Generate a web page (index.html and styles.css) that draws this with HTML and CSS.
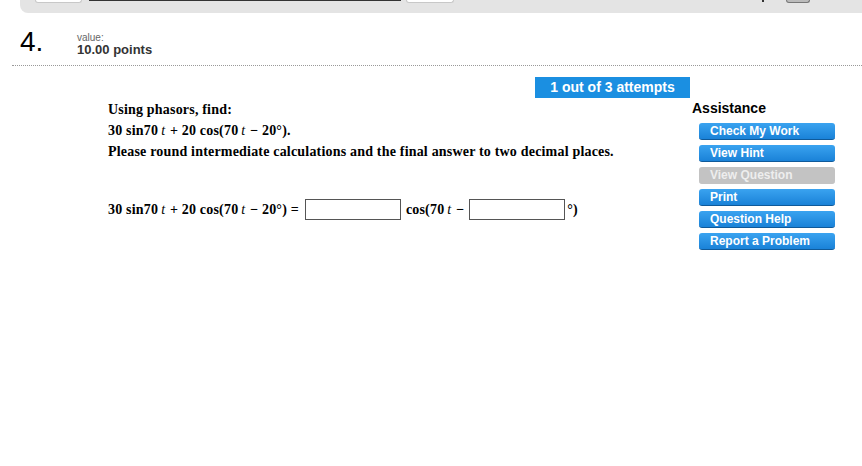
FILE: index.html
```html
<!DOCTYPE html>
<html>
<head>
<meta charset="utf-8">
<link rel="stylesheet" href="styles.css">
</head>
<body>
<div class="topbar">
  <div class="tb-btn tb-btn1"></div>
  <div class="tb-input"><div class="tb-arrow"></div></div>
  <div class="tb-btn tb-btn2"></div>
  <div class="tb-spacer"></div>
  <div class="tb-mark"></div>
  <div class="tb-icon"></div>
</div>
<div class="header">
  <div class="qnum">4.</div>
  <div class="value">
    <div class="value-label">value:</div>
    <div class="value-points">10.00 points</div>
  </div>
</div>
<div class="main">
  <div class="question">
    <p class="q-line">Using phasors, find:</p>
    <p class="q-line">30 sin70<i>t</i> + 20 cos(70<i>t</i> − 20°).</p>
    <p class="q-line">Please round intermediate calculations and the final answer to two decimal places.</p>
    <div class="answer">
      <span class="eq">30 sin70<i>t</i> + 20 cos(70<i>t</i> − 20°) =</span>
      <span class="box"></span>
      <span class="mid">cos(70<i>t</i> −</span>
      <span class="box"></span>
      <span class="end">°)</span>
    </div>
  </div>
  <div class="side">
    <div class="attempts">1 out of 3 attempts</div>
    <div class="assist">
      <div class="assist-title">Assistance</div>
      <div class="btn">Check My Work</div>
      <div class="btn">View Hint</div>
      <div class="btn disabled">View Question</div>
      <div class="btn">Print</div>
      <div class="btn">Question Help</div>
      <div class="btn">Report a Problem</div>
    </div>
  </div>
</div>
</body>
</html>
```
FILE: styles.css
```css
html, body { margin: 0; padding: 0; background: #fff; }
body { font-family: "Liberation Sans", Arial, sans-serif; width: 862px; height: 466px; overflow: hidden; }

.topbar {
  margin-left: 20px;
  height: 13px;
  background: #e4e4e4;
  border-bottom-left-radius: 8px;
  display: flex;
  align-items: flex-start;
}
.tb-btn {
  height: 2px;
  background: #fff;
  border: 1px solid #c8c8c8;
  border-top: none;
  border-radius: 0 0 5px 5px;
}
.tb-btn1 { margin-left: 15px; width: 45px; }
.tb-input {
  margin-left: 7px;
  width: 310px;
  height: 0px;
  background: #fff;
  border: 1px solid #333;
  border-top: none;
  display: flex;
  justify-content: flex-end;
}
.tb-arrow { width: 17px; height: 0; border-left: 1px solid #999; }
.tb-btn2 { margin-left: 5px; width: 46px; }
.tb-spacer { flex: 1; }
.tb-mark { width: 2px; height: 2px; background: #333; margin-right: 22px; }
.tb-icon {
  width: 22px; height: 2px; margin-right: 52px;
  background: #bbb; border: 1px solid #777; border-top: none;
  border-radius: 0 0 4px 4px;
}

.header {
  display: flex;
  align-items: flex-start;
  margin: 16px 0 0 12px;
  height: 36px;
  border-bottom: 1px dotted #999;
}
.qnum {
  font-size: 28px;
  line-height: 26px;
  color: #000;
  width: 57px;
  padding-left: 8px;
}
.value-label { font-size: 10px; color: #666; line-height: 11px; margin-top: 3px; }
.value-points { font-size: 13px; font-weight: bold; color: #333; line-height: 14px; }

.main {
  display: flex;
  margin-top: 11px;
}
.question {
  margin-left: 108px;
  width: 427px;
  flex-shrink: 0;
  padding-top: 22px;
  font-family: "Liberation Serif", "Times New Roman", serif;
  font-weight: bold;
  font-size: 14px;
  letter-spacing: 0.19px;
  color: #000;
}
.q-line { margin: 0; line-height: 21px; white-space: nowrap; }
.question i {
  font-weight: normal;
  font-family: "Liberation Serif", serif;
  font-style: italic;
  font-size: 14px;
  margin-left: 3px;
  margin-right: 1px;
}
.answer {
  margin-top: 37px;
  display: flex;
  align-items: center;
  white-space: nowrap;
  width: max-content;
}
.answer > span { flex-shrink: 0; }
.eq { margin-right: 6px; }
.mid { margin: 0 5px 0 5px; }
.end { margin-left: 2px; }
.box {
  display: inline-block;
  width: 94px;
  height: 19px;
  border: 1px solid #555;
  background: #fff;
}
.side { display: flex; flex-direction: column; }
.attempts {
  width: 155px;
  height: 21px;
  background: #1b8fe1;
  color: #fff;
  font-weight: bold;
  font-size: 14px;
  line-height: 20px;
  text-align: center;
}
.assist { margin-left: 157px; margin-top: 0; }
.assist-title { font-weight: bold; font-size: 14px; color: #000; line-height: 18px; margin-top: 1px; margin-bottom: 6px; }
.btn {
  margin-left: 7px;
  width: 136px;
  height: 17px;
  margin-bottom: 5px;
  padding-left: 11px;
  border-radius: 3px;
  background: linear-gradient(#3aa3f0, #1a82d8);
  border-bottom: 1px solid #0f5a9a;
  box-sizing: border-box;
  color: #fff;
  font-weight: bold;
  font-size: 12px;
  line-height: 16px;
}
.btn.disabled { background: #c3c3c3; border-bottom-color: #c3c3c3; color: #eee; }
```
